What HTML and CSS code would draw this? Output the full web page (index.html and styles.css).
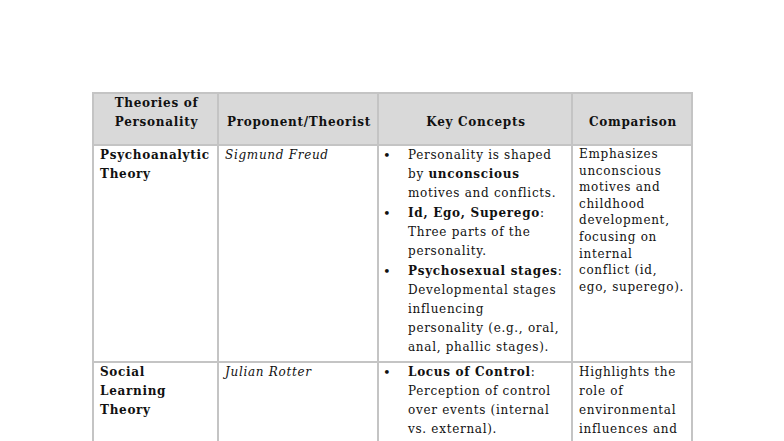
FILE: index.html
```html
<!DOCTYPE html>
<html>
<head>
<meta charset="utf-8">
<link rel="stylesheet" href="styles.css">
</head>
<body>
<div class="page">
<table class="theories">
  <colgroup>
    <col class="c1"><col class="c2"><col class="c3"><col class="c4">
  </colgroup>
  <thead>
    <tr>
      <th>Theories of<br>Personality</th>
      <th>Proponent/Theorist</th>
      <th>Key Concepts</th>
      <th>Comparison</th>
    </tr>
  </thead>
  <tbody>
    <tr>
      <td class="name">Psychoanalytic<br>Theory</td>
      <td class="who">Sigmund Freud</td>
      <td class="concepts">
        <ul>
          <li><span>Personality is shaped<br>by <b>unconscious</b><br>motives and conflicts.</span></li>
          <li><span><b>Id, Ego, Superego</b>:<br>Three parts of the<br>personality.</span></li>
          <li><span><b>Psychosexual stages</b>:<br>Developmental stages<br>influencing<br>personality (e.g., oral,<br>anal, phallic stages).</span></li>
        </ul>
      </td>
      <td class="compare tight">Emphasizes<br>unconscious<br>motives and<br>childhood<br>development,<br>focusing on<br>internal<br>conflict (id,<br>ego, superego).</td>
    </tr>
    <tr>
      <td class="name">Social<br>Learning<br>Theory</td>
      <td class="who">Julian Rotter</td>
      <td class="concepts">
        <ul>
          <li><span><b>Locus of Control</b>:<br>Perception of control<br>over events (internal<br>vs. external).</span></li>
        </ul>
      </td>
      <td class="compare">Highlights the<br>role of<br>environmental<br>influences and</td>
    </tr>
  </tbody>
</table>
</div>
</body>
</html>
```

FILE: styles.css
```css
html, body {
  margin: 0;
  padding: 0;
  background: #ffffff;
}

.page {
  padding: 92px 0 0 92px;
}

.theories {
  border-collapse: collapse;
  table-layout: fixed;
  width: 599px;
  font-family: "DejaVu Serif", "Liberation Serif", serif;
  font-size: 12px;
  letter-spacing: 0.7px;
  color: #111111;
}

.c1 { width: 125px; }
.c2 { width: 160px; }
.c3 { width: 194px; }
.c4 { width: 120px; }

.theories th,
.theories td {
  border: 2px solid #c4c4c4;
  padding: 0 4px 0 6px;
  text-align: left;
  vertical-align: top;
  line-height: 19px;
  white-space: nowrap;
}

.theories th {
  background: #d9d9d9;
  font-weight: bold;
  text-align: center;
  vertical-align: bottom;
  padding-top: 0;
  padding-bottom: 12px;
  line-height: 19px;
}

.theories td {
  padding-top: 0;
  padding-bottom: 4px;
}

.name {
  font-weight: bold;
}

.who {
  font-style: italic;
}

.concepts ul {
  margin: 0 0 0 -2px;
  padding: 0;
  list-style: none;
}

.concepts li {
  display: flex;
  margin-bottom: 1px;
}

.concepts li::before {
  content: "\2022";
  flex: 0 0 25px;
  font-size: 13px;
}

.concepts li:last-child {
  margin-bottom: 0;
}

.compare.tight {
  line-height: 16.6px;
}
```
